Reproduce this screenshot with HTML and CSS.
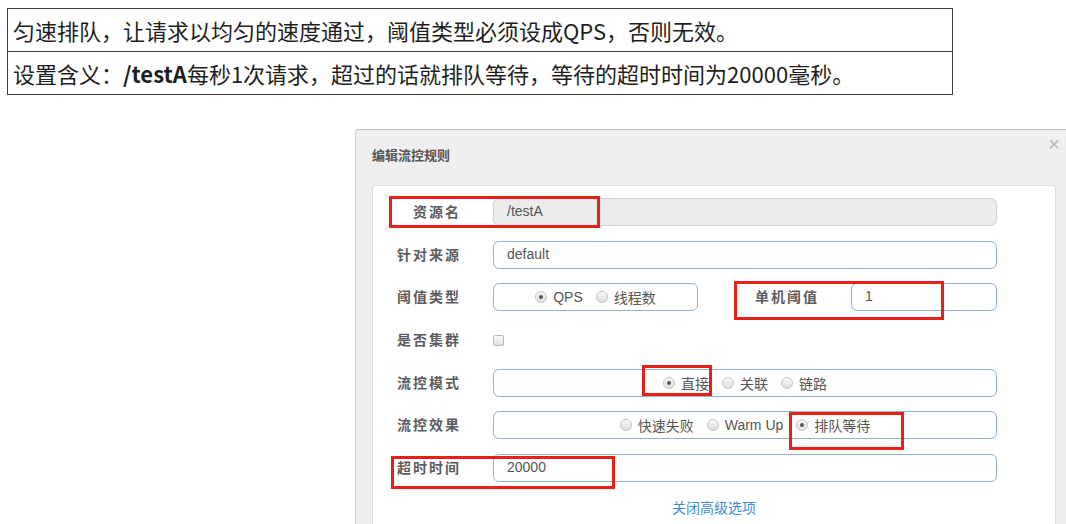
FILE: index.html
```html
<!DOCTYPE html>
<html lang="zh-CN">
<head>
  <meta charset="UTF-8">
  <title>编辑流控规则</title>
  <link rel="stylesheet" href="styles.css">
</head>
<body>
  <!-- Note table -->
  <table class="note">
    <tr><td>匀速排队，让请求以均匀的速度通过，阈值类型必须设成QPS，否则无效。</td></tr>
    <tr><td>设置含义：<b>/testA</b>每秒1次请求，超过的话就排队等待，等待的超时时间为20000毫秒。</td></tr>
  </table>

  <!-- Rule dialog -->
  <div class="modal">
    <span class="modal-close">&times;</span>
    <h4 class="modal-title">编辑流控规则</h4>

    <div class="panel">
      <div class="row">
        <label>资源名</label>
        <div class="field disabled">/testA</div>
      </div>
      <div class="row">
        <label>针对来源</label>
        <div class="field">default</div>
      </div>
      <div class="row">
        <label>阈值类型</label>
        <div class="field radios narrow">
          <span class="radio checked"></span><span class="opt">QPS</span>
          <span class="radio"></span><span class="opt">线程数</span>
        </div>
        <label class="label-2">单机阈值</label>
        <div class="field small">1</div>
      </div>
      <div class="row">
        <label>是否集群</label>
        <div class="check-wrap"><span class="checkbox"></span></div>
      </div>
      <div class="row">
        <label>流控模式</label>
        <div class="field radios">
          <span class="radio checked"></span><span class="opt">直接</span>
          <span class="radio"></span><span class="opt">关联</span>
          <span class="radio"></span><span class="opt">链路</span>
        </div>
      </div>
      <div class="row">
        <label>流控效果</label>
        <div class="field radios">
          <span class="radio"></span><span class="opt">快速失败</span>
          <span class="radio"></span><span class="opt">Warm Up</span>
          <span class="radio checked"></span><span class="opt">排队等待</span>
        </div>
      </div>
      <div class="row">
        <label>超时时间</label>
        <div class="field">20000</div>
      </div>
      <div class="toggle-link">关闭高级选项</div>
    </div>

    <!-- red highlight boxes -->
    <div class="mark m1"></div>
    <div class="mark m2"></div>
    <div class="mark m3"></div>
    <div class="mark m4"></div>
    <div class="mark m5"></div>
  </div>
</body>
</html>
```

FILE: styles.css
```css
body {
  margin: 0;
  background: #fff;
  font-family: "Liberation Sans", "Noto Sans CJK SC", sans-serif;
  overflow: hidden;
}

/* Note table */
.note {
  margin: 8px 0 0 7px;
  width: 946px;
  border-collapse: collapse;
  font-family: "Noto Sans CJK SC", sans-serif;
  font-size: 22px;
  color: #1e1e1e;
}

.note td {
  border: 1px solid #3c3c3c;
  height: 42px;
  padding: 0 5px;
  line-height: 42px;
}

.note b {
  font-weight: 700;
}

/* Dialog */
.modal {
  position: relative;
  margin: 34px 0 0 355px;
  width: 720px;
  height: 400px;
  background: #efefef;
  border-top: 1px solid #bdbdbd;
  border-left: 1px solid #d0d0d0;
  border-radius: 3px 0 0 0;
}

.modal-close {
  position: absolute;
  top: 3px;
  right: 16px;
  font-size: 20px;
  color: #b5b5b5;
}

.modal-title {
  margin: 0;
  padding: 18px 16px 0;
  font-size: 13px;
  line-height: 16px;
  font-weight: 700;
  color: #555;
}

.panel {
  margin: 21px 0 0 16px;
  width: 684px;
  height: 400px;
  box-sizing: border-box;
  padding-top: 12px;
  background: #fff;
  border: 1px solid #dcdcdc;
  border-radius: 4px;
}

.row {
  display: flex;
  height: 28px;
  margin-bottom: 14.7px;
}

.row label {
  width: 120px;
  box-sizing: border-box;
  padding-right: 32px;
  text-align: right;
  font-size: 14px;
  letter-spacing: 2px;
  line-height: 28px;
  font-weight: 700;
  color: #5c5c5c;
}

.row .label-2 {
  width: 153px;
}

.field {
  width: 504px;
  height: 28px;
  box-sizing: border-box;
  padding: 0 13px;
  border: 1px solid #8fb2d6;
  border-radius: 6px;
  font-size: 14px;
  line-height: 24px;
  color: #555;
}

.field.disabled {
  background: #ececec;
  border-color: #cfcfcf;
}

.field.narrow {
  width: 205px;
}

.field.small {
  width: 146px;
}

.radios {
  display: flex;
  align-items: center;
  justify-content: center;
  line-height: normal;
}

.radio {
  width: 10px;
  height: 10px;
  border: 1px solid #c4c4c4;
  border-radius: 50%;
  background: linear-gradient(#fafafa, #dcdcdc);
  position: relative;
  margin-right: 6px;
}

.radio.checked::after {
  content: "";
  position: absolute;
  top: 3px;
  left: 3px;
  width: 4px;
  height: 4px;
  border-radius: 50%;
  background: #555;
}

.opt {
  margin-right: 13px;
  color: #555;
}

.opt:last-child {
  margin-right: 0;
}

.check-wrap {
  display: flex;
  align-items: center;
}

.checkbox {
  width: 9px;
  height: 9px;
  border: 1px solid #b8b8b8;
  border-radius: 2px;
  background: linear-gradient(#fafafa, #e2e2e2);
}

.toggle-link {
  text-align: center;
  margin-top: 8px;
  font-size: 14px;
  color: #3c8edb;
}

/* Highlight boxes */
.mark {
  position: absolute;
  border: 3px solid #ea1f17;
  box-sizing: border-box;
}

.m1 { left: 33px; top: 66px; width: 211px; height: 32px; }
.m2 { left: 378px; top: 151px; width: 210px; height: 39px; }
.m3 { left: 286px; top: 235px; width: 70px; height: 31px; }
.m4 { left: 433px; top: 282px; width: 115px; height: 38px; }
.m5 { left: 35px; top: 326px; width: 224px; height: 33px; }
```
